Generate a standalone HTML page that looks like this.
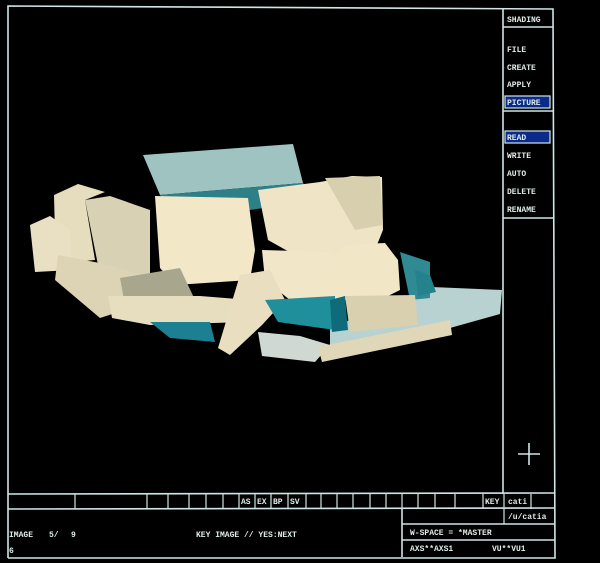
<!DOCTYPE html>
<html><head><style>
body{margin:0;background:#000;width:600px;height:563px;overflow:hidden}
svg{display:block}
text{font-family:"Liberation Mono",monospace;font-size:8px;fill:#dfeee8;font-weight:bold}
</style></head><body>
<svg width="600" height="563" viewBox="0 0 600 563">
<rect width="600" height="563" fill="#000"/>
<g stroke="#cfe6e6" stroke-width="1.6" fill="none">
<polyline points="8,558 8,6 553,9 555,558 8,558"/>
<line x1="503" y1="9" x2="503" y2="494"/>
<line x1="503" y1="27" x2="553" y2="27"/>
<line x1="503" y1="111" x2="554" y2="111"/>
<line x1="503" y1="218" x2="554" y2="218"/>
<line x1="8" y1="494" x2="555" y2="493"/>
<line x1="8" y1="509" x2="555" y2="508"/>
<g stroke-width="1.2">
<line x1="75" y1="494" x2="75" y2="509"/><line x1="147" y1="494" x2="147" y2="509"/>
<line x1="168" y1="494" x2="168" y2="509"/><line x1="189" y1="494" x2="189" y2="509"/>
<line x1="206" y1="494" x2="206" y2="509"/><line x1="223" y1="494" x2="223" y2="509"/>
<line x1="239" y1="494" x2="239" y2="509"/><line x1="255" y1="494" x2="255" y2="509"/>
<line x1="271" y1="494" x2="271" y2="509"/><line x1="288" y1="494" x2="288" y2="509"/>
<line x1="306" y1="494" x2="306" y2="509"/><line x1="321" y1="494" x2="321" y2="509"/>
<line x1="337" y1="494" x2="337" y2="509"/><line x1="353" y1="494" x2="353" y2="509"/>
<line x1="370" y1="494" x2="370" y2="509"/><line x1="386" y1="494" x2="386" y2="509"/>
<line x1="402" y1="494" x2="402" y2="509"/><line x1="418" y1="494" x2="418" y2="509"/>
<line x1="435" y1="494" x2="435" y2="509"/><line x1="455" y1="494" x2="455" y2="509"/>
<line x1="483" y1="494" x2="483" y2="509"/><line x1="504" y1="494" x2="504" y2="524"/>
<line x1="531" y1="494" x2="531" y2="509"/>
</g>
<line x1="402" y1="509" x2="402" y2="557"/>
<line x1="402" y1="524" x2="555" y2="524"/>
<line x1="402" y1="540" x2="555" y2="540"/>
<line x1="518" y1="454" x2="540" y2="454"/><line x1="529" y1="443" x2="529" y2="465"/>
</g>
<rect x="505" y="96" width="45" height="12" fill="#0b2a8a" stroke="#cfe6e6" stroke-width="1.2"/>
<rect x="505" y="131" width="45" height="12" fill="#0b2a8a" stroke="#cfe6e6" stroke-width="1.2"/>
<text x="507" y="22">SHADING</text>
<text x="507" y="52">FILE</text>
<text x="507" y="70">CREATE</text>
<text x="507" y="87">APPLY</text>
<text x="507" y="105">PICTURE</text>
<text x="507" y="140">READ</text>
<text x="507" y="158">WRITE</text>
<text x="507" y="176">AUTO</text>
<text x="507" y="194">DELETE</text>
<text x="507" y="212">RENAME</text>
<text x="241" y="504" font-size="7">AS</text><text x="257" y="504" font-size="7">EX</text>
<text x="273" y="504" font-size="7">BP</text><text x="290" y="504" font-size="7">SV</text>
<text x="485" y="504" font-size="7">KEY</text><text x="508" y="504" font-size="7">cati</text>
<text x="508" y="519" font-size="7">/u/catia</text>
<text x="410" y="535" font-size="7">W-SPACE = *MASTER</text>
<text x="410" y="551" font-size="7">AXS**AXS1</text><text x="492" y="551" font-size="7">VU**VU1</text>
<text x="9" y="537" font-size="7">IMAGE</text><text x="49" y="537" font-size="7">5/</text><text x="71" y="537" font-size="7">9</text>
<text x="196" y="537" font-size="7">KEY IMAGE // YES:NEXT</text>
<text x="9" y="553" font-size="7">6</text>
<!-- building -->
<g stroke="none">
<polygon points="330,328 432,287 502,290 500,314 450,328 360,352 330,350" fill="#b7d2d0"/>
<polygon points="143,155 293,144 303,183 160,195" fill="#9fc3c0"/>
<polygon points="400,252 430,262 430,298 410,300" fill="#2f8a94"/>
<polygon points="160,195 303,183 320,200 250,210 170,210" fill="#2d7f88"/>
<polygon points="258,190 320,182 352,176 382,177 383,230 370,262 300,258 268,240" fill="#efe5c6"/>
<polygon points="325,178 380,176 383,225 355,230" fill="#d8cfae"/>
<polygon points="155,196 248,198 255,250 250,280 175,285 160,268" fill="#f2e8c8"/>
<polygon points="85,200 110,196 150,210 150,275 120,280 100,275" fill="#d8d1b3"/>
<polygon points="54,195 78,184 105,192 85,200 95,260 70,262 55,235" fill="#e6dcbe"/>
<polygon points="30,225 50,216 70,230 72,270 35,272" fill="#e9e0c4"/>
<polygon points="58,255 110,265 150,278 140,305 100,318 55,280" fill="#ddd4b6"/>
<polygon points="120,278 180,268 195,300 175,310 125,305" fill="#a8a68c"/>
<polygon points="108,296 200,296 250,300 245,322 150,325 112,318" fill="#e7dec0"/>
<polygon points="150,322 210,322 215,342 170,338" fill="#1c7f92"/>
<polygon points="262,250 330,252 345,265 330,300 290,300 265,280" fill="#f1e7c8"/>
<polygon points="320,270 345,245 385,243 398,260 400,290 380,300 325,300" fill="#f1e7c6"/>
<polygon points="240,275 270,270 285,300 262,325 230,355 218,348" fill="#e9dfc0"/>
<polygon points="265,300 335,296 335,330 278,322" fill="#1f8f9c"/>
<polygon points="330,300 345,296 348,330 332,332" fill="#0f6b7a"/>
<polygon points="345,296 415,295 418,325 350,332" fill="#d9d0b0"/>
<polygon points="258,332 300,336 330,345 315,362 262,356" fill="#cfd8d2"/>
<polygon points="318,347 450,320 452,335 322,362" fill="#e0d7b8"/>
<polygon points="415,270 430,275 436,292 418,296" fill="#24828c"/>
</g>
</svg>
</body></html>
